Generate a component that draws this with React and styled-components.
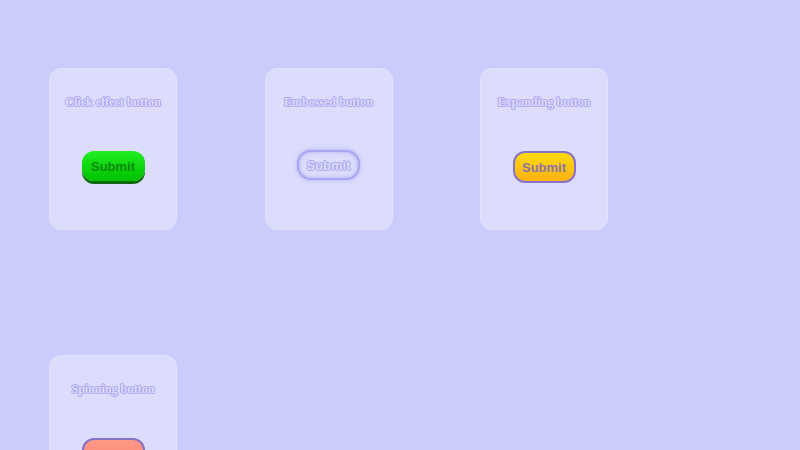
import styled, { createGlobalStyle } from "styled-components";

const Global = createGlobalStyle`
  html, body {
    margin: 0;
    padding: 0;
    background: #ccccfc;
  }
`;

const Page = styled.div`
  display: grid;
  grid-template-columns: repeat(3, 128px);
  column-gap: 87.5px;
  row-gap: 125px;
  padding: 68px 0 0 49px;
`;

const Card = styled.div`
  box-sizing: border-box;
  height: 162px;
  border-radius: 12px;
  background: #dcdcfc;
  border: 1px solid #e2e2ff;
  display: flex;
  flex-direction: column;
  align-items: center;
  padding-top: 26px;
`;

const Title = styled.h3`
  margin: 0;
  font-family: "Liberation Serif", serif;
  font-size: 12px;
  font-weight: bold;
  color: #dedcfc;
  text-shadow:
    1px 0 0 #a9a4f0,
    -1px 0 0 #a9a4f0,
    0 1px 0 #a9a4f0,
    0 -1px 0 #a9a4f0;
  line-height: 14px;
`;

const Button = styled.button`
  box-sizing: border-box;
  width: 63px;
  height: 32px;
  margin-top: 42px;
  border-radius: 12px;
  font-family: "Liberation Sans", Arial, sans-serif;
  font-weight: bold;
  font-size: 13px;
  cursor: pointer;
  padding: 0;
`;

const ClickButton = styled(Button)`
  height: 30px;
  border: none;
  background: linear-gradient(#22ee22, #00c000);
  color: #0a8a0a;
  box-shadow: 0 3px 0 #0a6a0a;
`;

const EmbossButton = styled(Button)`
  height: 30px;
  margin-top: 41px;
  border-radius: 14px;
  background: #dcdcfc;
  border: 2px solid #a9a5f1;
  box-shadow: 0 0 4px #b0acf4, inset 0 0 4px #b0acf4;
  color: #dcdcfc;
  text-shadow:
    1px 0 0 #aaa6f0,
    -1px 0 0 #aaa6f0,
    0 1px 0 #aaa6f0,
    0 -1px 0 #aaa6f0;
`;

const FancyButton = styled(Button)`
  border: 2px solid ${(p) => p.$edge};
  background: ${(p) => p.$fill};
  color: #8a74a8;
`;

export default function App() {
  return (
    <>
      <Global />
      <Page>
        <Card>
          <Title>Click effect button</Title>
          <ClickButton>Submit</ClickButton>
        </Card>
        <Card>
          <Title>Embossed button</Title>
          <EmbossButton>Submit</EmbossButton>
        </Card>
        <Card>
          <Title>Expanding button</Title>
          <FancyButton $edge="#8672c8" $fill="linear-gradient(#ffdc10, #ffb010)">
            Submit
          </FancyButton>
        </Card>
        <Card>
          <Title>Spinning button</Title>
          <FancyButton $edge="#8672c8" $fill="linear-gradient(#ff9a88, #ff8070)">
            Submit
          </FancyButton>
        </Card>
      </Page>
    </>
  );
}
